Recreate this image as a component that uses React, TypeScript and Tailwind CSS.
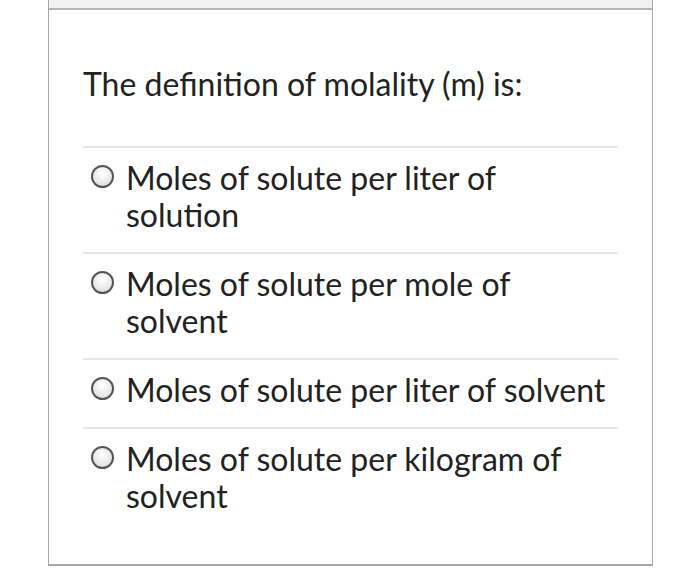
const options = [
  "Moles of solute per liter of solution",
  "Moles of solute per mole of solvent",
  "Moles of solute per liter of solvent",
  "Moles of solute per kilogram of solvent",
];

function Radio() {
  return (
    <span className="mt-[6px] h-[23px] w-[23px] shrink-0 rounded-full border-2 border-[#555] bg-[radial-gradient(circle_at_50%_35%,#ffffff,#e4e4e4_70%,#cfcfcf)]" />
  );
}

export default function App() {
  return (
    <div className="h-[572px] w-[700px] bg-white font-['Lato',sans-serif] text-[#222]">
      <div className="ml-[48px] h-[566px] w-[605px] border-x border-b-2 border-[#a8a8a8]">
        <div className="h-[10px] border-b-2 border-[#b4b4b4] bg-[#f2f2f2]" />
        <div className="px-[34px]">
          <h1 className="pt-[55px] pb-[44px] text-[32px] leading-[37px]">
            The definition of molality (m) is:
          </h1>
          <ul>
            {options.map((o) => (
              <li
                key={o}
                className="flex gap-[12px] border-t-2 border-[#e6e6e6] pt-[11px] pb-[19px] pl-[8px]"
              >
                <Radio />
                <span className="w-[484px] text-[32px] leading-[37px]">{o}</span>
              </li>
            ))}
          </ul>
        </div>
      </div>
    </div>
  );
}
